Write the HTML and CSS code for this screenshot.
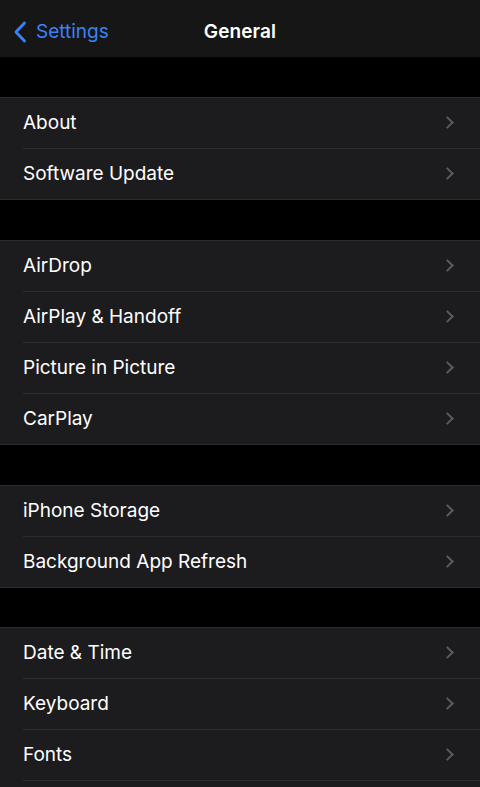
FILE: index.html
```html
<!DOCTYPE html>
<html lang="en">

<head>
  <meta charset="UTF-8">
  <title>General</title>
  <meta name="viewport" content="width=device-width, initial-scale=1.0">
  <link rel="stylesheet" href="styles.css">
</head>

<body>

  <header class="nav-bar">
    <a class="back" href="#">
      <svg class="back-icon" width="14" height="22" viewBox="0 0 14 22">
        <path d="M11.5 2 L3 11 L11.5 20" fill="none" stroke="#3a82f7" stroke-width="2.8" stroke-linecap="round" stroke-linejoin="round" />
      </svg>
      <span>Settings</span>
    </a>
    <div class="nav-title">General</div>
  </header>

  <div class="group">
    <div class="row"><span>About</span><i class="chev"></i></div>
    <div class="row"><span>Software Update</span><i class="chev"></i></div>
  </div>

  <div class="group">
    <div class="row"><span>AirDrop</span><i class="chev"></i></div>
    <div class="row"><span>AirPlay &amp; Handoff</span><i class="chev"></i></div>
    <div class="row"><span>Picture in Picture</span><i class="chev"></i></div>
    <div class="row"><span>CarPlay</span><i class="chev"></i></div>
  </div>

  <div class="group">
    <div class="row"><span>iPhone Storage</span><i class="chev"></i></div>
    <div class="row"><span>Background App Refresh</span><i class="chev"></i></div>
  </div>

  <div class="group group-last">
    <div class="row"><span>Date &amp; Time</span><i class="chev"></i></div>
    <div class="row"><span>Keyboard</span><i class="chev"></i></div>
    <div class="row"><span>Fonts</span><i class="chev"></i></div>
    <div class="row"></div>
  </div>

</body>

</html>
```

FILE: styles.css
```css
* {
  box-sizing: border-box;
}

body {
  margin: 0;
  background: #000;
  font-family: Inter, "Open Sans", sans-serif;
  color: #fff;
  overflow: hidden;
}

.nav-bar {
  position: relative;
  height: 57px;
  padding-top: 5px;
  background: #161616;
  display: flex;
  align-items: center;
  justify-content: center;
}

.back {
  position: absolute;
  left: 13px;
  top: 20px;
  display: flex;
  align-items: center;
  gap: 9px;
  color: #3a82f7;
  text-decoration: none;
  font-size: 19px;
}

.nav-title {
  font-size: 19px;
  font-weight: 600;
  letter-spacing: 0.1px;
}

.group {
  margin-top: 40px;
  background: #1c1c1e;
  border-top: 1px solid #2c2c2e;
  border-bottom: 1px solid #2c2c2e;
}

.group-last {
  margin-top: 39px;
}

.row {
  height: 51px;
  margin-left: 23px;
  padding-right: 24px;
  padding-bottom: 1px;
  display: flex;
  align-items: center;
  justify-content: space-between;
  font-size: 19px;
  border-bottom: 1px solid #2e2e30;
}

.row:last-child {
  border-bottom: none;
  height: 50px;
}

.chev {
  width: 9px;
  height: 9px;
  border-top: 2px solid #5b5b5f;
  border-right: 2px solid #5b5b5f;
  transform: rotate(45deg);
  margin-right: 4px;
}
```
